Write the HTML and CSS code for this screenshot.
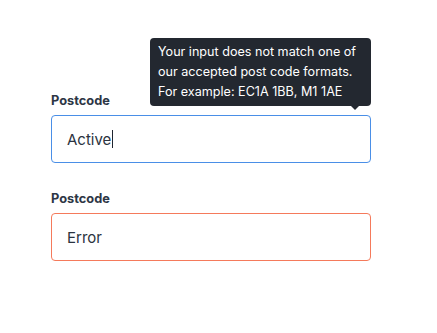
FILE: index.html
```html
<!DOCTYPE html>
<html>
<head>
<meta charset="utf-8">
<link rel="stylesheet" href="styles.css">
</head>
<body>
<div class="page">
  <div class="field">
    <label class="label">Postcode</label>
    <div class="input input-active"><span class="value">Active</span><span class="caret"></span></div>
    <div class="tooltip">Your input does not match one of our accepted post code formats. For example: EC1A 1BB, M1 1AE</div>
  </div>
  <div class="field">
    <label class="label">Postcode</label>
    <div class="input input-error"><span class="value">Error</span></div>
  </div>
</div>
</body>
</html>
```
FILE: styles.css
```css
html, body {
  margin: 0;
  padding: 0;
  background: #ffffff;
}
body {
  font-family: Inter, "Noto Sans", sans-serif;
  width: 437px;
  height: 333px;
  overflow: hidden;
}
.page {
  padding: 93px 0 0 51px;
  display: flex;
  flex-direction: column;
  gap: 28px;
}
.field {
  position: relative;
  width: 320px;
  display: flex;
  flex-direction: column;
}
.label {
  font-size: 12.8px;
  line-height: 16px;
  font-weight: 700;
  color: #2d3645;
  margin-bottom: 6px;
}
.input {
  box-sizing: border-box;
  height: 48px;
  border-radius: 4px;
  border: 1px solid #cfd6de;
  padding: 0 15px;
  display: flex;
  align-items: center;
  font-size: 15px;
  color: #2b3340;
}
.input-active {
  border-color: #4a8fe7;
}
.input-error {
  border-color: #f57a5b;
}
.caret {
  display: inline-block;
  width: 1px;
  height: 18px;
  background: #1f2530;
  margin-left: 1px;
}
.tooltip {
  position: absolute;
  right: 0;
  bottom: 57px;
  box-sizing: border-box;
  width: 221px;
  background: #232830;
  color: #ffffff;
  font-size: 12.6px;
  line-height: 20px;
  padding: 4px 8px 4px 8px;
  border-radius: 4px;
}
.tooltip::after {
  content: "";
  position: absolute;
  right: 12px;
  bottom: -4px;
  border-left: 4px solid transparent;
  border-right: 4px solid transparent;
  border-top: 4px solid #232830;
}
```
